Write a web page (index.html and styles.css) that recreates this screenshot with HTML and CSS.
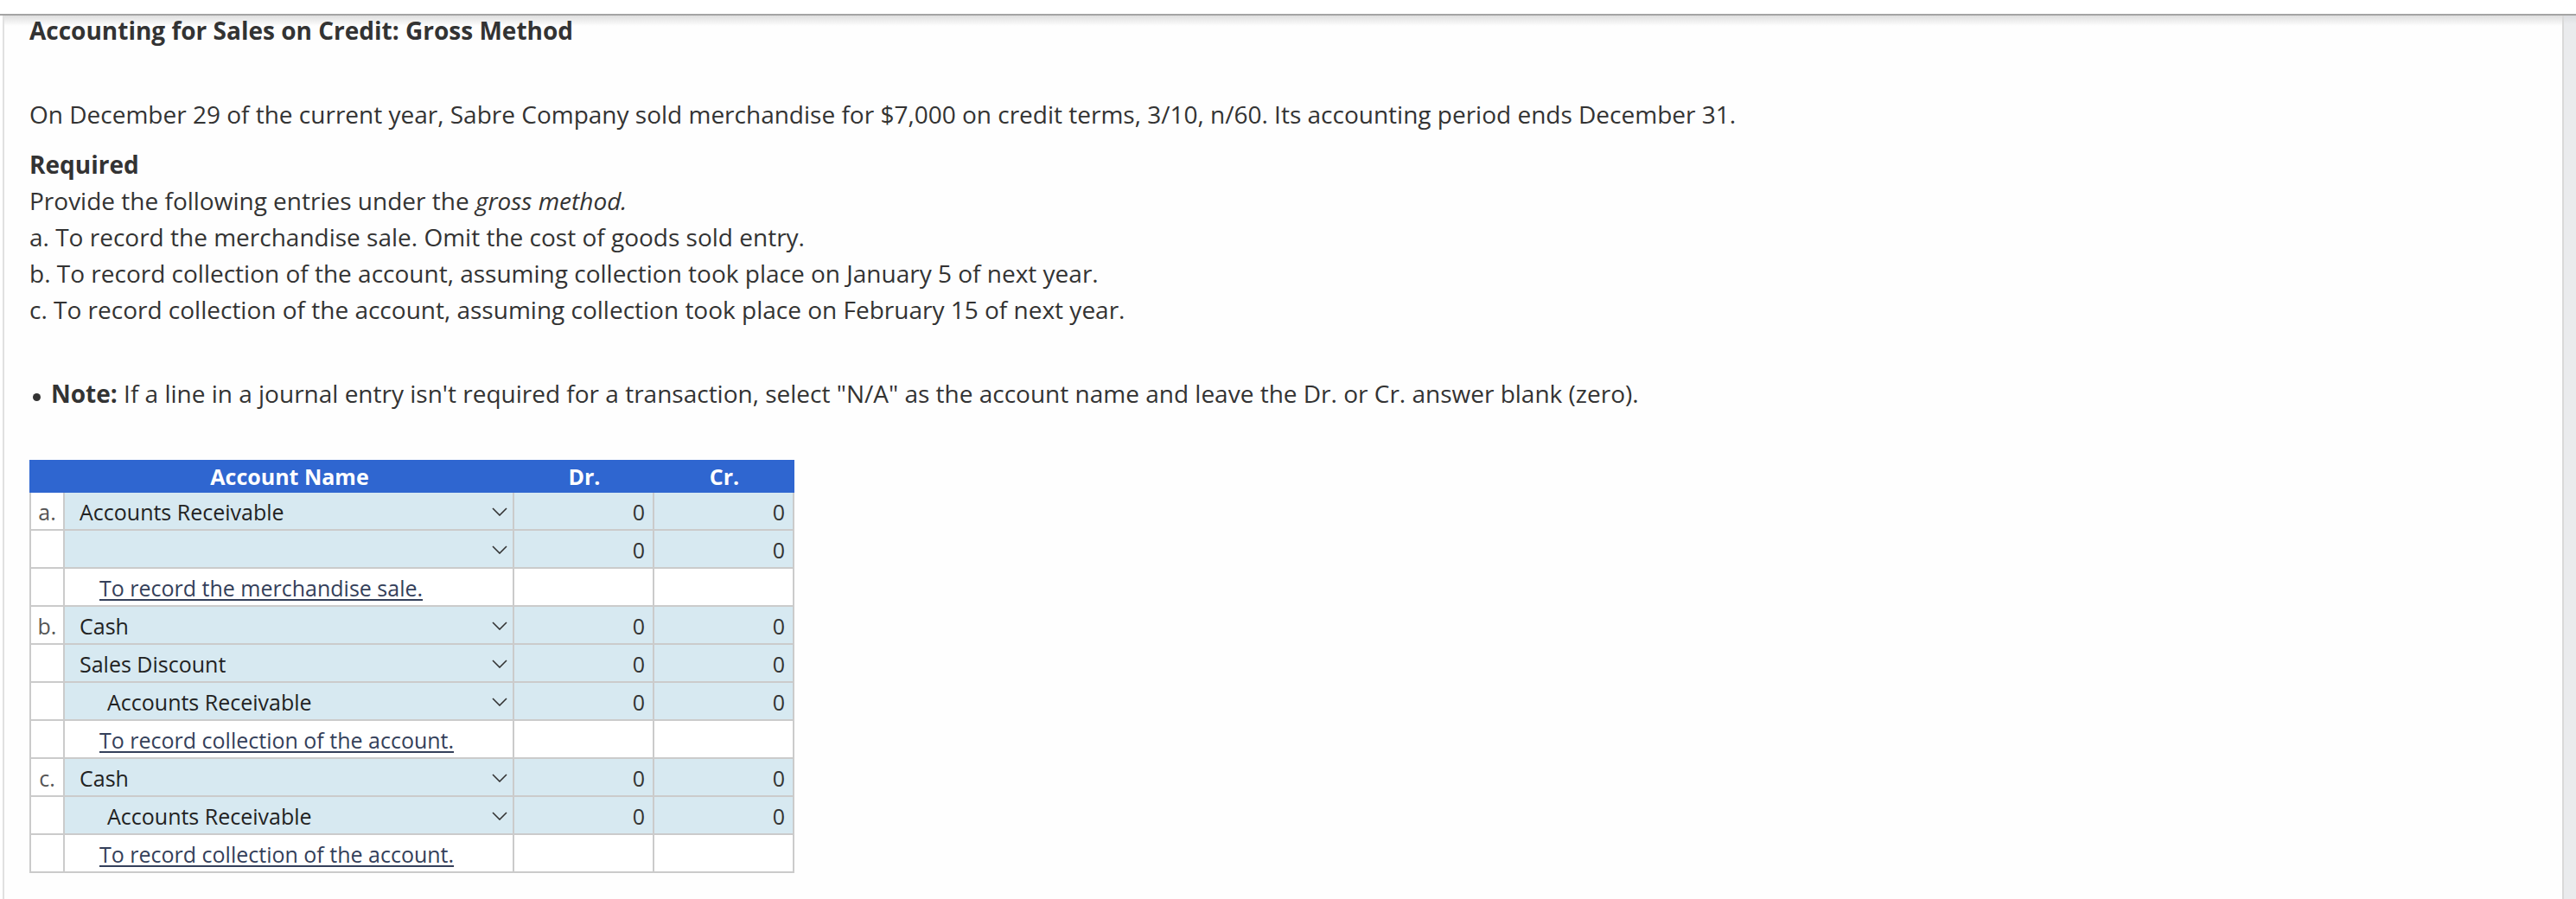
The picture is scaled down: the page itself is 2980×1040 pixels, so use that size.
FILE: index.html
```html
<!DOCTYPE html>
<html lang="en">
<head>
<meta charset="utf-8">
<title>Accounting for Sales on Credit: Gross Method</title>
<link rel="stylesheet" href="styles.css">
</head>
<body>
<div class="frame">
  <main class="panel">
    <h1 class="title">Accounting for Sales on Credit: Gross Method</h1>
    <p class="intro">On December 29 of the current year, Sabre Company sold merchandise for $7,000 on credit terms, 3/10, n/60. Its accounting period ends December 31.</p>
    <div class="required">
      <div class="required-label">Required</div>
      <div>Provide the following entries under the <em>gross method.</em></div>
      <div>a. To record the merchandise sale. Omit the cost of goods sold entry.</div>
      <div>b. To record collection of the account, assuming collection took place on January 5 of next year.</div>
      <div>c. To record collection of the account, assuming collection took place on February 15 of next year.</div>
    </div>
    <div class="note"><span class="dot"></span><b>Note:</b> If a line in a journal entry isn't required for a transaction, select "N/A" as the account name and leave the Dr. or Cr. answer blank (zero).</div>

    <div class="journal">
      <div class="hd"></div>
      <div class="hd">Account Name</div>
      <div class="hd">Dr.</div>
      <div class="hd">Cr.</div>

      <div class="cell lt">a.</div>
      <div class="cell acct"><span>Accounts Receivable</span><svg class="chev" viewBox="0 0 18 10"><polyline points="1,1 9,9 17,1"/></svg></div>
      <div class="cell num">0</div>
      <div class="cell num">0</div>

      <div class="cell lt"></div>
      <div class="cell acct"><span></span><svg class="chev" viewBox="0 0 18 10"><polyline points="1,1 9,9 17,1"/></svg></div>
      <div class="cell num">0</div>
      <div class="cell num">0</div>

      <div class="cell lt"></div>
      <div class="cell memo"><span class="link">To record the merchandise sale.</span></div>
      <div class="cell blank"></div>
      <div class="cell blank"></div>

      <div class="cell lt">b.</div>
      <div class="cell acct"><span>Cash</span><svg class="chev" viewBox="0 0 18 10"><polyline points="1,1 9,9 17,1"/></svg></div>
      <div class="cell num">0</div>
      <div class="cell num">0</div>

      <div class="cell lt"></div>
      <div class="cell acct"><span>Sales Discount</span><svg class="chev" viewBox="0 0 18 10"><polyline points="1,1 9,9 17,1"/></svg></div>
      <div class="cell num">0</div>
      <div class="cell num">0</div>

      <div class="cell lt"></div>
      <div class="cell acct cr"><span>Accounts Receivable</span><svg class="chev" viewBox="0 0 18 10"><polyline points="1,1 9,9 17,1"/></svg></div>
      <div class="cell num">0</div>
      <div class="cell num">0</div>

      <div class="cell lt"></div>
      <div class="cell memo"><span class="link">To record collection of the account.</span></div>
      <div class="cell blank"></div>
      <div class="cell blank"></div>

      <div class="cell lt">c.</div>
      <div class="cell acct"><span>Cash</span><svg class="chev" viewBox="0 0 18 10"><polyline points="1,1 9,9 17,1"/></svg></div>
      <div class="cell num">0</div>
      <div class="cell num">0</div>

      <div class="cell lt"></div>
      <div class="cell acct cr"><span>Accounts Receivable</span><svg class="chev" viewBox="0 0 18 10"><polyline points="1,1 9,9 17,1"/></svg></div>
      <div class="cell num">0</div>
      <div class="cell num">0</div>

      <div class="cell lt"></div>
      <div class="cell memo"><span class="link">To record collection of the account.</span></div>
      <div class="cell blank"></div>
      <div class="cell blank"></div>
    </div>
  </main>
  <div class="rail"></div>
</div>
</body>
</html>
```
FILE: styles.css
```css
* { box-sizing: border-box; }
html, body { margin: 0; padding: 0; }
body {
  width: 2980px;
  height: 1040px;
  overflow: hidden;
  background: #ffffff;
  font-family: "Open Sans", "Liberation Sans", sans-serif;
  color: #333333;
}
.frame {
  margin-top: 16px;
  height: 1024px;
  display: flex;
  border-top: 2px solid #a4a4a4;
}
.panel {
  flex: 1;
  margin-left: 3px;
  border-left: 2px solid #e1e1e1;
  border-right: 2px solid #d9d9d9;
  background: linear-gradient(#dedede, #fefefe 12px) no-repeat, #fefefe;
  padding-left: 29px;
}
.rail {
  width: 14px;
  background: linear-gradient(#dcdde0, #eaebed 10px) no-repeat, #eaebed;
}
.title {
  margin: 0;
  font-size: 28px;
  line-height: 34px;
  font-weight: 700;
  color: #333333;
}
.intro {
  margin: 59px 0 0;
  font-size: 28px;
  line-height: 42px;
}
.required {
  margin-top: 16px;
  font-size: 28px;
  line-height: 42px;
}
.required-label { font-weight: 700; }
.note {
  margin-top: 55px;
  font-size: 28px;
  line-height: 42px;
}
.dot {
  display: inline-block;
  width: 9px;
  height: 9px;
  border-radius: 50%;
  background: #333333;
  margin-left: 4px;
  margin-right: 12px;
  vertical-align: 2px;
}
.journal {
  margin-top: 56px;
  display: grid;
  grid-template-columns: 41px 520px 162px 162px;
  width: 885px;
  font-size: 25px;
  color: #222222;
}
.hd {
  height: 38px;
  background: #2f66d0;
  color: #ffffff;
  font-weight: 700;
  display: flex;
  align-items: center;
  justify-content: center;
}
.cell {
  height: 44px;
  border-right: 2px solid #cbcbcb;
  border-bottom: 2px solid #cbcbcb;
  display: flex;
  align-items: center;
  background: #d7e9f1;
  padding-top: 1px;
}
.lt {
  border-left: 2px solid #cbcbcb;
  justify-content: center;
  background: #ffffff;
  color: #555555;
}
.acct {
  justify-content: space-between;
  padding-left: 17px;
  padding-right: 6px;
}
.acct.cr { padding-left: 49px; }
.chev {
  width: 18px;
  height: 10px;
  fill: none;
  stroke: #333333;
  stroke-width: 1.6;
}
.num {
  justify-content: flex-end;
  padding-right: 9px;
  color: #333333;
}
.memo {
  background: #ffffff;
  padding-left: 40px;
}
.blank { background: #ffffff; }
.link {
  color: #34405a;
  text-decoration: underline;
  text-underline-offset: 3px;
}
```
